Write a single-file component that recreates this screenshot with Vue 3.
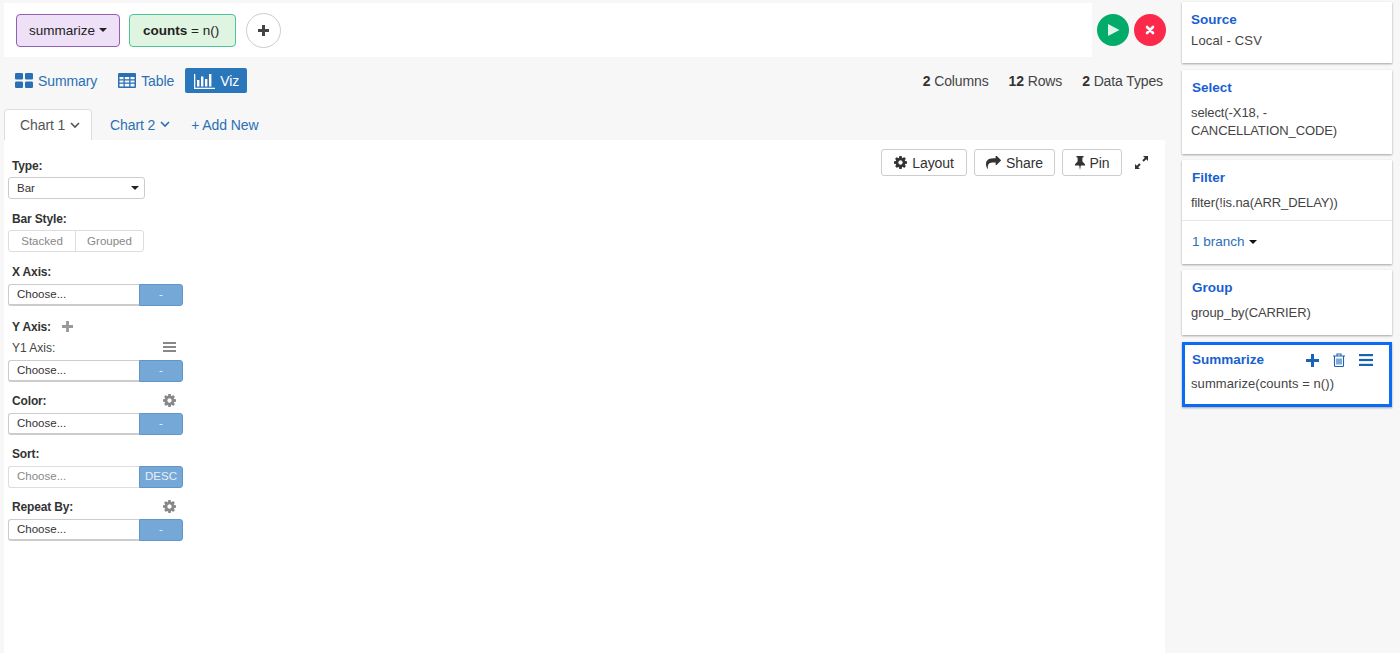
<script setup>
const gear = "M1152 896q0-106-75-181t-181-75-181 75-75 181 75 181 181 75 181-75 75-181zm512-109v222q0 12-8 23t-20 13l-185 28q-19 54-39 91 35 50 107 138 10 12 10 25t-9 23q-27 37-99 108t-94 71q-12 0-26-9l-138-108q-44 23-91 38-16 136-29 186-7 28-36 28h-222q-14 0-24.500-8.500t-11.500-21.500l-28-184q-49-16-90-37l-141 107q-10 9-25 9-14 0-25-11-126-114-165-168-7-10-7-23 0-12 8-23 15-21 51-66.500t54-70.500q-27-50-41-99l-183-27q-13-2-21-12.500t-8-23.500v-222q0-12 8-23t19-13l186-28q14-46 39-92-40-57-107-138-10-12-10-24 0-10 9-23 26-36 98.500-107.500t94.500-71.500q13 0 26 10l138 107q44-23 91-38 16-136 29-186 7-28 36-28h222q14 0 24.500 8.500t11.500 21.500l28 184q49 16 90 37l142-107q9-9 24-9 13 0 25 10 129 119 165 170 7 8 7 22 0 12-8 23-15 21-51 66.500t-54 70.500q26 50 41 98l183 28q13 2 21 12.500t8 23.500z";
const share = "M1792 640q0 26-19 45l-512 512q-19 19-45 19t-45-19-19-45v-256h-224q-98 0-175.500 6t-154 21.500-133 42.500-105.500 69.500-80 101-48.500 138.500-17.500 181q0 55 5 123 0 6 2.500 23.500t2.500 26.500q0 15-8.500 25t-23.500 10q-16 0-28-17-7-9-13-22t-13.500-30-10.500-24q-127-285-127-451 0-199 53-333 162-403 875-403h224v-256q0-26 19-45t45-19 45 19l512 512q19 19 19 45z";
const cards = [
  { title: "Source", body: ["Local - CSV"], cls: "c-source" },
  { title: "Select", body: ["select(-X18, -", "CANCELLATION_CODE)"], cls: "c-select" },
];
</script>

<template>
  <div class="page">
    <main class="main">
      <div class="top">
        <div class="cmdbar">
          <span class="token purple">summarize <i class="caret"></i></span>
          <span class="token green"><b>counts</b>&nbsp;= n()</span>
          <span class="round-add">
            <svg width="13" height="13" viewBox="0 0 13 13"><path d="M5 1h3v4h4v3H8v4H5V8H1V5h4z" fill="#444"/></svg>
          </span>
        </div>
        <div class="run">
          <span class="circle go">
            <svg width="13" height="14" viewBox="0 0 13 14"><path d="M1 1v12l11.500-6z" fill="#dff5ea"/></svg>
          </span>
          <span class="circle stop">
            <svg width="10" height="10" viewBox="0 0 10 10"><path d="M2 2l6 6M8 2l-6 6" stroke="#fff" stroke-width="2.600" stroke-linecap="round"/></svg>
          </span>
        </div>
      </div>

      <div class="views">
        <a class="view">
          <svg width="18" height="15" viewBox="0 0 18 15" fill="#2a70b5"><rect width="8" height="6.500" rx="1.200"/><rect x="10" width="8" height="6.500" rx="1.200"/><rect y="8.500" width="8" height="6.500" rx="1.200"/><rect x="10" y="8.500" width="8" height="6.500" rx="1.200"/></svg>
          Summary
        </a>
        <a class="view">
          <svg width="18" height="15" viewBox="0 0 18 15" fill="#2a70b5"><path fill-rule="evenodd" d="M1 0h16a1 1 0 0 1 1 1v13a1 1 0 0 1-1 1H1a1 1 0 0 1-1-1V1a1 1 0 0 1 1-1zm.500 4v2.200h4V4zm5.300 0v2.200h4.400V4zm5.700 0v2.200h4V4zM1.500 7.400v2.200h4V7.400zm5.300 0v2.200h4.400V7.400zm5.700 0v2.200h4V7.400zM1.500 10.800v2.700h4v-2.700zm5.300 0v2.700h4.400v-2.700zm5.700 0v2.700h4v-2.700z"/></svg>
          Table
        </a>
        <a class="view active">
          <svg width="21" height="16" viewBox="0 0 21 16" fill="#fff"><path d="M0 1h1.300v13.700H21V16H0z"/><rect x="3" y="7" width="2.400" height="6.500"/><rect x="7" y="3.500" width="2.400" height="10"/><rect x="11" y="6" width="2.400" height="7.500"/><rect x="15" y="1" width="2.400" height="12.500"/></svg>
          Viz
        </a>
        <div class="stats">
          <span><b>2</b> Columns</span>
          <span><b>12</b> Rows</span>
          <span><b>2</b> Data Types</span>
        </div>
      </div>

      <div class="tabs">
        <span class="tab on">Chart 1
          <svg class="chev" width="10" height="7" viewBox="0 0 10 7"><path d="M1 1l4 4 4-4" fill="none" stroke="#555" stroke-width="1.600"/></svg>
        </span>
        <span class="tab">Chart 2
          <svg class="chev" width="10" height="7" viewBox="0 0 10 7"><path d="M1 1l4 4 4-4" fill="none" stroke="#2a70b5" stroke-width="1.600"/></svg>
        </span>
        <span class="tab add">+ Add New</span>
      </div>

      <section class="panel">
        <form class="form" onsubmit="return false">
          <div class="field first">
            <label>Type:</label>
            <div class="select">Bar<i class="caret dark"></i></div>
          </div>
          <div class="field first">
            <label>Bar Style:</label>
            <div class="seg"><span>Stacked</span><span>Grouped</span></div>
          </div>
          <div class="field">
            <label>X Axis:</label>
            <div class="combo"><span class="inp">Choose...</span><span class="btn">-</span></div>
          </div>
          <div class="field yaxis">
            <label>Y Axis:
              <svg class="plus" width="11" height="11" viewBox="0 0 10 10"><path d="M3.700 0h2.600v3.700H10v2.600H6.300V10H3.700V6.300H0V3.700h3.700z" fill="#999"/></svg>
            </label>
            <div class="sublabel">Y1 Axis:
              <svg width="13" height="10" viewBox="0 0 13 10" fill="#888"><rect width="13" height="2"/><rect y="4" width="13" height="2"/><rect y="8" width="13" height="2"/></svg>
            </div>
            <div class="combo"><span class="inp">Choose...</span><span class="btn">-</span></div>
          </div>
          <div class="field">
            <label class="spread">Color:
              <svg width="13" height="13" viewBox="128 128 1536 1536"><path :d="gear" fill="#888"/></svg>
            </label>
            <div class="combo"><span class="inp">Choose...</span><span class="btn">-</span></div>
          </div>
          <div class="field">
            <label>Sort:</label>
            <div class="combo"><span class="inp muted">Choose...</span><span class="btn desc">DESC</span></div>
          </div>
          <div class="field">
            <label class="spread">Repeat By:
              <svg width="13" height="13" viewBox="128 128 1536 1536"><path :d="gear" fill="#888"/></svg>
            </label>
            <div class="combo"><span class="inp">Choose...</span><span class="btn">-</span></div>
          </div>
        </form>

        <div class="actions">
          <span class="act w-layout">
            <svg width="13" height="13" viewBox="128 128 1536 1536"><path :d="gear" fill="#333"/></svg>
            Layout
          </span>
          <span class="act w-share">
            <svg width="15" height="13" viewBox="0 128 1792 1536"><path :d="share" fill="#333"/></svg>
            Share
          </span>
          <span class="act w-pin">
            <svg width="10" height="14" viewBox="0 0 10 14" fill="#333"><path d="M1.500 0h7v1.400H7.400v4.200L10 8.200v1.200H5.800L5 14l-.8-4.600H0V8.200l2.600-2.600V1.400H1.500z"/></svg>
            Pin
          </span>
          <svg class="expand" width="13" height="13" viewBox="0 0 13 13" fill="#333"><path d="M8 0h5v5l-1.800-1.800-2.500 2.500-1.400-1.400 2.500-2.500zM5 13H0V8l1.800 1.800 2.500-2.500 1.400 1.400-2.500 2.500z"/></svg>
        </div>
      </section>
    </main>

    <aside class="side">
      <div v-for="c in cards" :key="c.title" class="card" :class="c.cls">
        <h4>{{ c.title }}</h4>
        <p v-for="l in c.body" :key="l">{{ l }}</p>
      </div>
      <div class="card c-filter">
        <div class="filter-top">
          <h4>Filter</h4>
          <p>filter(!is.na(ARR_DELAY))</p>
        </div>
        <div class="branch">1 branch <i class="caret black"></i></div>
      </div>
      <div class="card c-group">
        <h4>Group</h4>
        <p>group_by(CARRIER)</p>
      </div>
      <div class="card c-sum">
        <div class="sum-head">
          <h4>Summarize</h4>
          <svg class="s-plus" width="13" height="13" viewBox="0 0 13 13"><path d="M5 0h3v5h5v3H8v5H5V8H0V5h5z" fill="#1a62b4"/></svg>
          <svg class="s-trash" width="12" height="14" viewBox="0 0 12 14" fill="none" stroke="#1a62b4" stroke-width="1.100"><path d="M0 3h12M4 3V1h4v2M1.500 3v9.500a1 1 0 0 0 1 1h7a1 1 0 0 0 1-1V3M4 5.500v6M6 5.500v6M8 5.500v6"/></svg>
          <svg class="s-bars" width="14" height="12" viewBox="0 0 14 12" fill="#1a62b4"><rect width="14" height="2.200"/><rect y="4.900" width="14" height="2.200"/><rect y="9.800" width="14" height="2.200"/></svg>
        </div>
        <p>summarize(counts = n())</p>
      </div>
    </aside>
  </div>
</template>

<style>
html, body { margin: 0; background: #f7f7f7; }
</style>

<style scoped>
.page {
  display: flex;
  height: 653px;
  overflow: hidden;
  background: #f7f7f7;
  font-family: "Liberation Sans", Arial, sans-serif;
  font-size: 14px;
  color: #333;
}
.main { width: 1161px; margin-left: 4px; display: flex; flex-direction: column; flex: none; }
.top { display: flex; margin-top: 3px; height: 54px; }
.cmdbar {
  flex: none;
  width: 1088px;
  background: #fff;
  display: flex;
  align-items: center;
  padding-left: 12px;
  box-sizing: border-box;
}
.token {
  height: 33px;
  box-sizing: border-box;
  border-radius: 4px;
  display: flex;
  align-items: center;
  font-size: 13.500px;
  color: #222;
}
.purple { width: 104px; background: #eee0f7; border: 1px solid #9160b3; padding-left: 12px; margin-right: 9px; }
.green { width: 107px; background: #e0f4e2; border: 1px solid #4cc49a; padding-left: 13px; margin-right: 10px; }
.caret {
  display: inline-block;
  width: 0; height: 0;
  margin-left: 4px;
  border-left: 4px solid transparent;
  border-right: 4px solid transparent;
  border-top: 4px solid #222;
}
.round-add {
  width: 35px; height: 35px;
  box-sizing: border-box;
  border: 1px solid #ccc;
  border-radius: 50%;
  background: #fff;
  display: flex; align-items: center; justify-content: center;
}
.run { display: flex; flex: none; gap: 5px; margin: 11px 0 0 5px; }
.circle { flex: none; width: 32px; height: 32px; border-radius: 50%; display: flex; align-items: center; justify-content: center; }
.go { background: #03ab6a; padding-left: 1px; box-sizing: border-box; }
.stop { background: #fb2a4a; }

.views { display: flex; align-items: flex-start; height: 26px; margin-top: 11px; }
.view {
  display: flex; align-items: center; gap: 5px;
  height: 25px;
  color: #2a70b5;
  font-size: 14px;
  letter-spacing: -0.100px;
  padding: 0 4px 0 11px;
  white-space: nowrap;
}
.view:nth-child(1) { margin-right: 11px; }
.view:nth-child(2) { padding-left: 6px; margin-right: 5px; gap: 5px; }
.view.active {
  background: #2a76bb;
  color: #fff;
  border-radius: 2px;
  padding: 0 0 0 9px;
  width: 62px;
  box-sizing: border-box;
  margin-left: 2px;
  gap: 5px;
}
.stats { margin-left: auto; display: flex; gap: 20px; color: #444; font-size: 14px; padding-right: 2px; letter-spacing: -0.120px; line-height: 26px; }
.stats b { color: #333; }

.tabs { display: flex; height: 31px; margin-top: 15px; align-items: stretch; }
.tab {
  display: flex; align-items: center; gap: 5px;
  color: #2a70b5;
  padding: 0 0 0 18px;
  white-space: nowrap;
  font-size: 14px;
  letter-spacing: -0.100px;
}
.tab.on {
  background: #fff;
  color: #555;
  width: 88px;
  box-sizing: border-box;
  border: 1px solid #ddd;
  border-bottom: 0;
  border-radius: 4px 4px 0 0;
  padding-left: 15px;
}
.tab.add { padding-left: 21px; }

.panel {
  flex: 1;
  background: #fff;
  display: flex;
  justify-content: space-between;
  padding: 0 0 0 4px;
}
.form { width: 175px; padding-top: 18px; }
.field { height: 53px; }
.field label {
  display: block;
  box-sizing: border-box;
  height: 20px;
  padding: 1px 0 0 4px;
  font-size: 12px;
  font-weight: bold;
  letter-spacing: -0.150px;
  line-height: 15px;
  color: #333;
}
.field.first label { height: 19px; }
.field label.spread, .sublabel {
  display: flex;
  justify-content: space-between;
  align-items: flex-start;
  padding-right: 7px;
}
.plus { margin-left: 8px; vertical-align: -1px; }
.field.yaxis { height: 76px; padding-top: 2px; box-sizing: border-box; }
.sublabel {
  box-sizing: border-box;
  height: 21px;
  padding-top: 1px;
  padding-left: 4px;
  font-size: 12px;
  line-height: 16px;
  color: #444;
}
.sublabel svg { margin-top: 2px; }
.select {
  width: 137px; height: 22px;
  box-sizing: border-box;
  border: 1px solid #ccc;
  border-radius: 3px;
  display: flex; align-items: center; justify-content: space-between;
  padding: 0 5px 0 8px;
  font-size: 11.500px;
}
.seg {
  width: 136px; height: 22px;
  box-sizing: border-box;
  border: 1px solid #ddd;
  border-radius: 3px;
  display: flex;
  font-size: 11.500px;
  color: #888;
}
.seg span { display: flex; align-items: center; justify-content: center; }
.seg span:first-child { width: 66px; border-right: 1px solid #ddd; }
.seg span:last-child { flex: 1; }
.combo { display: flex; width: 175px; height: 22px; font-size: 11.500px; }
.inp {
  flex: 1;
  box-sizing: border-box;
  border: 1px solid #ccc;
  border-right: 0;
  border-bottom: 2px solid #ccc;
  border-radius: 3px 0 0 3px;
  padding-left: 8px;
  line-height: 19px;
  color: #333;
}
.inp.muted { color: #888; border-bottom-width: 1px; border-color: #ddd; }
.btn {
  width: 44px;
  box-sizing: border-box;
  background: #76a8d7;
  border: 1px solid #5f97cd;
  border-radius: 0 3px 3px 0;
  color: #e8f0f8;
  text-align: center;
  line-height: 19px;
}

.actions { display: flex; align-items: flex-start; padding-top: 9px; padding-right: 17px; }
.act {
  height: 27px;
  box-sizing: border-box;
  border: 1px solid #ccc;
  border-radius: 3px;
  display: flex; align-items: center; justify-content: center; gap: 5px;
  font-size: 14px;
  letter-spacing: -0.100px;
  color: #333;
  margin-right: 7px;
}
.w-layout { width: 86px; }
.w-share { width: 81px; }
.w-pin { width: 60px; }
.expand { margin: 7px 0 0 6px; }

.side { flex: none; width: 210px; margin-left: 17px; padding-top: 2px; display: flex; flex-direction: column; gap: 6px; }
.card {
  background: #fff;
  box-shadow: 0 1px 2px rgba(0, 0, 0, 0.35);
  box-sizing: border-box;
  padding: 0 9px;
  font-size: 13px;
  letter-spacing: -0.100px;
  color: #444;
}
.card h4 {
  margin: 0;
  font-size: 13.500px;
  font-weight: bold;
  letter-spacing: 0;
  color: #1a5fd0;
  line-height: 18px;
}
.card p { margin: 0; line-height: 18px; white-space: nowrap; }
.c-source { height: 61px; padding-top: 9px; }
.c-source h4 { margin-bottom: 3px; }
.c-source p { letter-spacing: 0.150px; }
.c-select { height: 84px; padding-top: 9px; margin-top: 1px; }
.c-select h4 { margin-bottom: 7px; padding-left: 1px; }
.c-filter { height: 104px; padding: 0; }
.filter-top { height: 61px; padding: 9px 9px 0; box-sizing: border-box; border-bottom: 1px solid #e6e6e6; }
.filter-top h4 { margin-bottom: 7px; padding-left: 1px; }
.branch { padding: 13px 0 0 10px; color: #2a70b5; font-size: 13.500px; letter-spacing: 0; line-height: 16px; }
.caret.black { border-top-color: #111; margin-left: 1px; vertical-align: 2px; }
.c-group { height: 65px; padding-top: 9px; }
.c-group h4 { margin-bottom: 7px; padding-left: 1px; }
.c-sum {
  height: 65px;
  border: 3px solid #0a6cf5;
  padding: 6px 6px 0 6px;
  margin-top: 1px;
}
.c-sum p { letter-spacing: 0.080px; }
.sum-head { display: flex; align-items: center; height: 18px; margin-bottom: 6px; }
.sum-head h4 { padding-left: 1px; flex: 1; }
.s-trash { margin: 0 14px 0 14px; }
.s-bars { margin-right: 10px; }
</style>
